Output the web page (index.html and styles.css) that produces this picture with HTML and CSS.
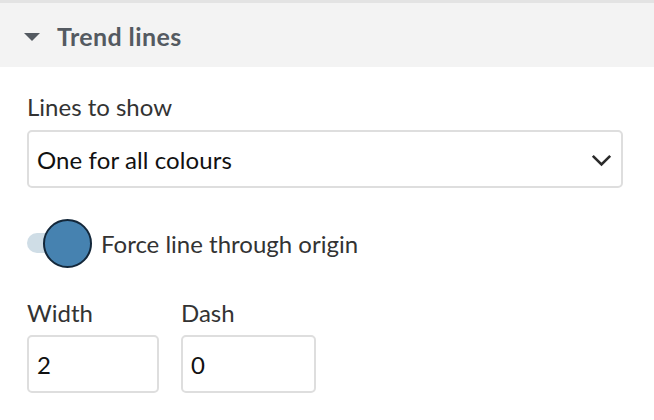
FILE: index.html
```html
<!DOCTYPE html>
<html>
<head>
<meta charset="utf-8">
<link rel="stylesheet" href="styles.css">
</head>
<body>
<div class="panel">
  <div class="section-header">
    <span class="caret"></span>
    <span class="title">Trend lines</span>
  </div>
  <div class="content">
    <div class="field">
      <div class="label">Lines to show</div>
      <div class="select">
        <span class="select-text">One for all colours</span>
        <svg class="chevron" width="21" height="13" viewBox="0 0 21 13"><path d="M1.8 1.8 L10.5 10.5 L19.2 1.8" fill="none" stroke="#2b2b2b" stroke-width="2.6"/></svg>
      </div>
    </div>
    <div class="toggle-row">
      <div class="toggle">
        <div class="track"></div>
        <div class="knob"></div>
      </div>
      <span class="toggle-label">Force line through origin</span>
    </div>
    <div class="inputs">
      <div class="small-field">
        <div class="label">Width</div>
        <div class="input w1">2</div>
      </div>
      <div class="small-field">
        <div class="label">Dash</div>
        <div class="input w2">0</div>
      </div>
    </div>
  </div>
</div>
</body>
</html>
```
FILE: styles.css
```css
html, body {
  margin: 0;
  padding: 0;
  background: #ffffff;
}
body {
  font-family: "Lato", "Noto Sans", sans-serif;
  color: #333333;
}
.panel {
  width: 654px;
  height: 420px;
  overflow: hidden;
}
.section-header {
  border-top: 3px solid #e3e3e3;
  background: #f3f3f3;
  display: flex;
  align-items: center;
  padding-left: 24px;
  box-sizing: border-box;
  height: 67px;
}
.caret {
  width: 0;
  height: 0;
  border-left: 8px solid transparent;
  border-right: 8px solid transparent;
  border-top: 8px solid #545a61;
  margin-top: 4px;
}
.title {
  margin-left: 17px;
  font-weight: 700;
  font-size: 25px;
  line-height: 30px;
  color: #545a61;
  letter-spacing: 0.4px;
  margin-top: 2px;
}
.content {
  padding: 0 31px 0 27px;
}
.field {
  padding-top: 27px;
}
.label {
  font-size: 24px;
  line-height: 26px;
  color: #333333;
}
.select {
  margin-top: 10px;
  height: 58px;
  box-sizing: border-box;
  border: 2px solid #dedede;
  border-radius: 5px;
  display: flex;
  align-items: center;
  justify-content: space-between;
  padding: 0 9px 0 8px;
}
.select-text {
  font-size: 24px;
  letter-spacing: 0.1px;
  color: #111111;
}
.chevron {
  margin-top: 2px;
}
.toggle-row {
  margin-top: 31px;
  display: flex;
  align-items: center;
  height: 49px;
}
.toggle {
  position: relative;
  width: 65px;
  height: 49px;
}
.track {
  position: absolute;
  left: 0;
  top: 14px;
  width: 44px;
  height: 20px;
  border-radius: 10px;
  background: #cfdde6;
}
.knob {
  position: absolute;
  left: 16px;
  top: 0;
  width: 49px;
  height: 49px;
  box-sizing: border-box;
  border-radius: 50%;
  background: #4682b0;
  border: 2px solid #13273a;
}
.toggle-label {
  margin-left: 9px;
  font-size: 24px;
  color: #333333;
}
.inputs {
  margin-top: 32px;
  display: flex;
  gap: 22px;
}
.small-field .label {
  margin-bottom: 9px;
}
.input {
  height: 58px;
  box-sizing: border-box;
  border: 2px solid #dedede;
  border-radius: 5px;
  display: flex;
  align-items: center;
  padding-left: 8px;
  font-size: 24px;
  color: #111111;
}
.w1 { width: 132px; }
.w2 { width: 135px; }
```
